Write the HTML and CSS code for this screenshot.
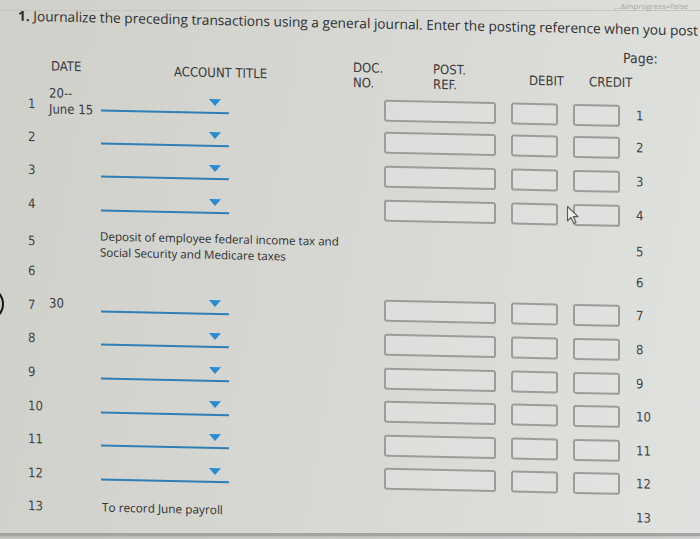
FILE: index.html
```html
<!DOCTYPE html>
<html lang="en">
<head>
<meta charset="utf-8">
<title>Journal</title>
<link rel="stylesheet" href="styles.css">
</head>
<body>
<div class="screen">
  <div class="urlbar"><span class="url">…&amp;inprogress=false</span></div>
  <div class="sheet">
    <p class="title"><b>1.</b> Journalize the preceding transactions using a general journal. Enter the posting reference when you post to the accounts.</p>
    <div class="page-label">Page:</div>
    <div class="grid head">
      <div class="h-num"></div>
      <div class="h-date">DATE</div>
      <div class="h-acct">ACCOUNT TITLE</div>
      <div class="h-doc">DOC.<br>NO.</div>
      <div class="h-post">POST.<br>REF.</div>
      <div class="h-debit">DEBIT</div>
      <div class="h-credit">CREDIT</div>
      <div></div>
    </div>

    <div class="grid row">
      <div class="num">1</div>
      <div class="date two">20--<br>June 15</div>
      <div class="select"><span class="caret"></span></div>
      <div></div>
      <div class="box post"></div>
      <div class="box money"></div>
      <div class="box money"></div>
      <div class="rnum">1</div>
    </div>
    <div class="grid row">
      <div class="num">2</div><div></div>
      <div class="select"><span class="caret"></span></div><div></div>
      <div class="box post"></div><div class="box money"></div><div class="box money"></div>
      <div class="rnum">2</div>
    </div>
    <div class="grid row">
      <div class="num">3</div><div></div>
      <div class="select"><span class="caret"></span></div><div></div>
      <div class="box post"></div><div class="box money"></div><div class="box money"></div>
      <div class="rnum">3</div>
    </div>
    <div class="grid row">
      <div class="num">4</div><div></div>
      <div class="select"><span class="caret"></span></div><div></div>
      <div class="box post"></div><div class="box money"></div><div class="box money"></div>
      <div class="rnum">4</div>
    </div>
    <div class="grid row">
      <div class="num">5</div><div></div>
      <div class="desc">Deposit of employee federal income tax and<br>Social Security and Medicare taxes</div>
      <div class="rnum">5</div>
    </div>
    <div class="grid row">
      <div class="num">6</div><div></div><div></div><div></div><div></div><div></div><div></div>
      <div class="rnum">6</div>
    </div>
    <div class="grid row">
      <div class="num">7</div><div class="date">30</div>
      <div class="select"><span class="caret"></span></div><div></div>
      <div class="box post"></div><div class="box money"></div><div class="box money"></div>
      <div class="rnum">7</div>
    </div>
    <div class="grid row">
      <div class="num">8</div><div></div>
      <div class="select"><span class="caret"></span></div><div></div>
      <div class="box post"></div><div class="box money"></div><div class="box money"></div>
      <div class="rnum">8</div>
    </div>
    <div class="grid row">
      <div class="num">9</div><div></div>
      <div class="select"><span class="caret"></span></div><div></div>
      <div class="box post"></div><div class="box money"></div><div class="box money"></div>
      <div class="rnum">9</div>
    </div>
    <div class="grid row">
      <div class="num">10</div><div></div>
      <div class="select"><span class="caret"></span></div><div></div>
      <div class="box post"></div><div class="box money"></div><div class="box money"></div>
      <div class="rnum">10</div>
    </div>
    <div class="grid row">
      <div class="num">11</div><div></div>
      <div class="select"><span class="caret"></span></div><div></div>
      <div class="box post"></div><div class="box money"></div><div class="box money"></div>
      <div class="rnum">11</div>
    </div>
    <div class="grid row">
      <div class="num">12</div><div></div>
      <div class="select"><span class="caret"></span></div><div></div>
      <div class="box post"></div><div class="box money"></div><div class="box money"></div>
      <div class="rnum">12</div>
    </div>
    <div class="grid row">
      <div class="num">13</div><div></div>
      <div class="memo">To record June payroll</div>
      <div class="rnum">13</div>
    </div>
  </div>
  <div class="bottom-edge"></div>
  <div class="arc"></div>
  <svg class="cursor" width="14" height="20" viewBox="0 0 14 20" aria-hidden="true">
    <path d="M1.5 1.5 L1.5 16 L5 12.5 L7.8 18.5 L10 17.5 L7.3 11.6 L12 11.6 Z" fill="#eceeed" stroke="#5a5a5a" stroke-width="1.1" stroke-linejoin="round"/>
  </svg>
</div>
</body>
</html>
```

FILE: styles.css
```css
html, body {
  margin: 0;
  padding: 0;
}
body {
  width: 700px;
  height: 539px;
  overflow: hidden;
  background: linear-gradient(100deg, #cfd0ca 0%, #d6d7d2 45%, #e0e2df 100%);
  color: #333;
  font-family: "Open Sans", "Liberation Sans", sans-serif;
}
.screen {
  position: relative;
  width: 700px;
  height: 539px;
  overflow: hidden;
}
.urlbar {
  height: 10px;
  border-bottom: 1px solid #c4c5c1;
  display: flex;
  justify-content: flex-end;
  align-items: center;
  padding-right: 12px;
}
.url {
  font-size: 8px;
  line-height: 9px;
  color: #a6a8a6;
  white-space: nowrap;
}
.sheet {
  height: 521px;
  transform: skewY(1.25deg);
  transform-origin: 350px 300px;
}
.title {
  margin: 0;
  padding: 3px 0 0 18px;
  height: 18px;
  line-height: 18px;
  font-size: 13.7px;
  white-space: nowrap;
  overflow: hidden;
  color: #2e2e2e;
}
.title b {
  font-weight: 700;
}
.page-label {
  margin-top: 12px;
  padding-left: 623px;
  height: 16px;
  line-height: 16px;
  font-family: "Liberation Sans Narrow", "DejaVu Sans Condensed", "Liberation Sans", sans-serif;
  font-size: 14px;
  color: #3a3a3a;
}
.grid {
  display: grid;
  grid-template-columns: 49px 51px 132px 152px 127px 62px 63px 1fr;
  align-items: center;
}
.head {
  height: 30px;
  font-family: "Liberation Sans Narrow", "DejaVu Sans Condensed", "Liberation Sans", sans-serif;
  font-size: 13px;
  line-height: 15px;
  color: #3a3a3a;
  white-space: nowrap;
}
.h-date { padding-left: 2px; margin-bottom: 6px; }
.h-acct { padding-left: 74px; }
.h-doc { padding-left: 121px; grid-column: 4; }
.h-post { padding-left: 49px; }
.h-debit { padding-left: 18px; margin-top: 2px; }
.h-credit { padding-left: 16px; margin-top: 2px; }
.head > div { overflow: visible; }

.row {
  height: 33.6px;
  font-size: 12px;
  line-height: 14px;
}
.head + .row { margin-top: 2px; }
.num {
  padding-left: 28px;
  margin-top: 3px;
  font-family: "Liberation Sans Narrow", "DejaVu Sans Condensed", "Liberation Sans", sans-serif;
  font-size: 13px;
  color: #444;
}
.date {
  font-family: "Liberation Sans Narrow", "DejaVu Sans Condensed", "Liberation Sans", sans-serif;
  font-size: 13px;
  color: #3a3a3a;
  white-space: nowrap;
}
.date.two {
  line-height: 16px;
  margin-bottom: 3px;
}
.select {
  width: 128px;
  height: 15px;
  box-sizing: border-box;
  margin-left: 1px;
  border-bottom: 2px solid #2f7fb6;
  display: flex;
  justify-content: flex-end;
  align-items: flex-start;
  padding-right: 8px;
}
.caret {
  width: 0;
  height: 0;
  border-left: 6.5px solid transparent;
  border-right: 6.5px solid transparent;
  border-top: 7px solid #2a8bd0;
}
.box {
  height: 22px;
  box-sizing: border-box;
  border: 2px solid #9c9c9a;
  border-radius: 3px;
  background: rgba(226, 228, 225, 0.55);
}
.post { width: 112px; }
.money { width: 47px; }
.rnum {
  grid-column: 8;
  font-family: "Liberation Sans Narrow", "DejaVu Sans Condensed", "Liberation Sans", sans-serif;
  font-size: 13px;
  color: #444;
}
.desc {
  grid-column: 3 / 8;
  margin-top: 8px;
  line-height: 16px;
  font-size: 11.6px;
  color: #2e2e2e;
  white-space: nowrap;
}
.memo {
  grid-column: 3 / 8;
  padding-left: 2px;
  font-size: 11.8px;
  color: #2e2e2e;
  white-space: nowrap;
}
.bottom-edge {
  height: 3px;
  margin-top: 1px;
  background: #a3a4a1;
  box-shadow: 0 2px 2px rgba(120, 120, 120, 0.3);
}
.arc {
  position: absolute;
  left: -30px;
  top: 287px;
  width: 30px;
  height: 30px;
  border: 2.5px solid #151515;
  border-radius: 50%;
}
.cursor {
  position: absolute;
  left: 566px;
  top: 205px;
}
```
